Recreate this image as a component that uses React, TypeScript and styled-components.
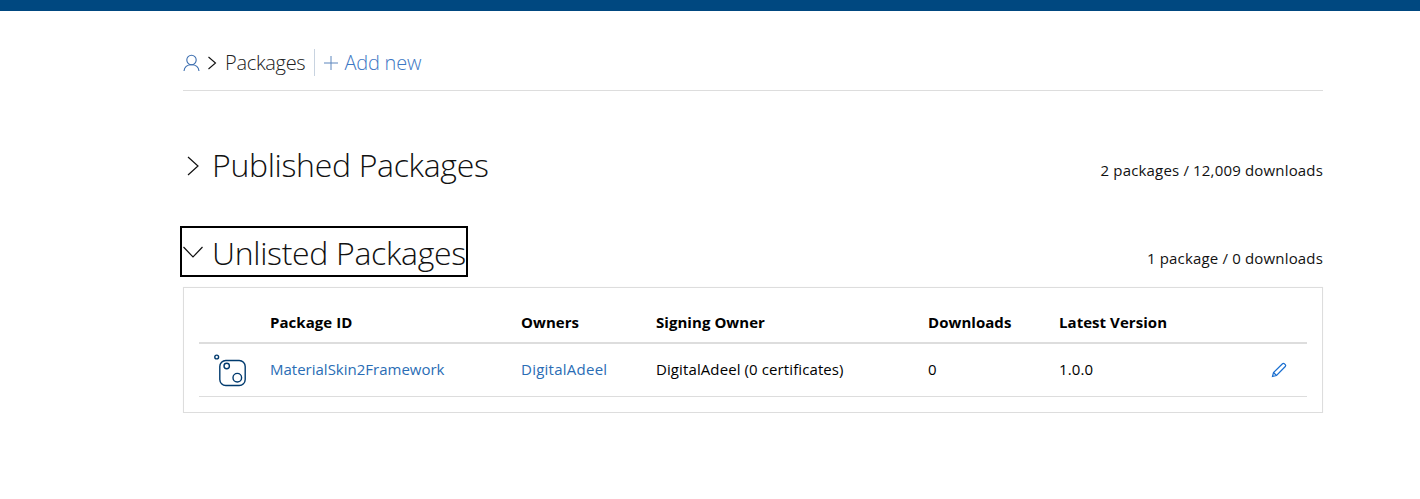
import styled, { createGlobalStyle } from 'styled-components'

const GlobalStyle = createGlobalStyle`
  html, body {
    margin: 0;
    padding: 0;
    background: #fff;
    color: #000;
    font-family: 'Open Sans', 'Noto Sans', 'Liberation Sans', sans-serif;
    font-size: 15px;
  }
`

const TopBar = styled.div`
  height: 11px;
  background-color: #004880;
`

const Container = styled.main`
  width: 1140px;
  margin-left: 183px;
`

const Breadcrumb = styled.nav`
  display: flex;
  align-items: center;
  height: 55px;
  padding-top: 24px;
  border-bottom: 1px solid #ddd;
  font-size: 20px;
  font-weight: 300;
`

const UserIcon = styled.svg`
  flex: none;
  display: block;
`

const CrumbChevron = styled.svg`
  flex: none;
  display: block;
  margin-left: 7px;
`

const CrumbText = styled.span`
  margin-left: 8px;
  padding-right: 9px;
  color: #222;
  letter-spacing: -0.3px;
`

const AddNew = styled.a`
  display: flex;
  align-items: center;
  gap: 6px;
  height: 27px;
  padding-left: 9px;
  border-left: 1px solid #c8d3e0;
  color: #3d77c4;
  letter-spacing: -0.2px;
`

const Section = styled.section<{ $top: number }>`
  margin-top: ${({ $top }) => $top}px;
`

const SectionHeader = styled.div`
  display: flex;
  align-items: center;
  justify-content: space-between;
`

const SectionToggle = styled.div<{ $focused?: boolean }>`
  display: flex;
  align-items: center;
  gap: 9px;
  height: ${({ $focused }) => ($focused ? 47 : 46)}px;
  margin-left: ${({ $focused }) => ($focused ? -1 : 0)}px;
  padding-left: ${({ $focused }) => ($focused ? 1 : 0)}px;
  outline: ${({ $focused }) => ($focused ? '2px solid #000' : 'none')};
`

const SectionTitle = styled.h2<{ $low?: boolean }>`
  margin: ${({ $low }) => ($low ? 3 : -2)}px 0 0;
  font-size: 32px;
  font-weight: 300;
  color: #111;
  letter-spacing: -0.32px;
  line-height: 46px;
`

const Summary = styled.span<{ $low?: boolean }>`
  margin-top: ${({ $low }) => ($low ? 13 : 8)}px;
  color: #111;
  letter-spacing: 0.17px;
`

const Panel = styled.div`
  margin-top: 12px;
  padding: 15px 15px 15px;
  border: 1px solid #ddd;
  box-shadow: 0 0 1px rgba(0, 0, 0, 0.05);
`

const Grid = styled.div`
  display: grid;
  grid-template-columns: 71px 251px 135px 272px 131px 1fr 40px;
`

const HeadCell = styled.div`
  display: flex;
  align-items: center;
  height: 37px;
  padding-bottom: 2px;
  border-bottom: 2px solid #ddd;
  font-weight: 700;
  letter-spacing: 0.05px;
`

const Cell = styled.div`
  display: flex;
  align-items: center;
  height: 50px;
  padding-bottom: 2px;
  border-bottom: 1px solid #ddd;
  letter-spacing: 0.1px;
`

const IconCell = styled(Cell)`
  padding-bottom: 0;
  height: 52px;
  padding-left: 14px;
`

const EditCell = styled(Cell)`
  padding-bottom: 0;
  height: 52px;
  padding-left: 4px;
`

const PackageLink = styled.a`
  color: #2a6db5;
  letter-spacing: 0;
`

const OwnerLink = styled(PackageLink)`
  letter-spacing: 0.25px;
`

const PackageIcon = () => (
  <svg width="36" height="36" viewBox="0 0 36 36" fill="none" stroke="#003a6e" strokeWidth="1.4">
    <circle cx="3.700" cy="5" r="1.900" />
    <rect x="6.800" y="8.500" width="25.400" height="25" rx="6" />
    <circle cx="13.700" cy="14" r="2.700" />
    <circle cx="24.300" cy="25.700" r="4.300" />
  </svg>
)

const PencilIcon = () => (
  <svg width="16" height="16" viewBox="0 0 16 16" fill="none" stroke="#1a6fd0" strokeWidth="1.200">
    <path d="M1.500 14.500l1-4L11.500 1.700a1.300 1.300 0 0 1 1.800 0l1 1a1.300 1.300 0 0 1 0 1.800L5.500 13.500z" />
    <path d="M2.500 10.500l3 3" />
  </svg>
)

const columns = ['', 'Package ID', 'Owners', 'Signing Owner', 'Downloads', 'Latest Version', '']

export default function App() {
  return (
    <>
      <GlobalStyle />
      <TopBar />
      <Container>
        <Breadcrumb>
          <UserIcon width="17" height="18" viewBox="0 0 17 18" fill="none" stroke="#3d6fb0" strokeWidth="1.100">
            <circle cx="8.500" cy="6" r="4.700" />
            <path d="M1 17c.4-4 3-6.300 7.500-6.300S15.600 13 16 17" />
          </UserIcon>
          <CrumbChevron width="10" height="14" viewBox="0 0 10 14" fill="none" stroke="#111" strokeWidth="1.100">
            <path d="M1.500 1l7 6-7 6" />
          </CrumbChevron>
          <CrumbText>Packages</CrumbText>
          <AddNew>
            <svg width="14" height="14" viewBox="0 0 14 14" stroke="#5d86bd" strokeWidth="1">
              <path d="M7 0v14M0 7h14" />
            </svg>
            Add new
          </AddNew>
        </Breadcrumb>

        <Section $top={52}>
          <SectionHeader>
            <SectionToggle>
              <svg width="20" height="22" viewBox="0 0 20 22" fill="none" stroke="#111" strokeWidth="1.200">
                <path d="M5 2l10 9-10 9" />
              </svg>
              <SectionTitle>Published Packages</SectionTitle>
            </SectionToggle>
            <Summary>2 packages / 12,009 downloads</Summary>
          </SectionHeader>
        </Section>

        <Section $top={39}>
          <SectionHeader>
            <SectionToggle $focused>
              <svg width="20" height="22" viewBox="0 0 20 22" fill="none" stroke="#111" strokeWidth="1.200">
                <path d="M0.500 6l9.500 10 9.500-10" />
              </svg>
              <SectionTitle $low>Unlisted Packages</SectionTitle>
            </SectionToggle>
            <Summary $low>1 package / 0 downloads</Summary>
          </SectionHeader>
          <Panel>
            <Grid>
              {columns.map((c, i) => (
                <HeadCell key={i}>{c}</HeadCell>
              ))}
              <IconCell>
                <PackageIcon />
              </IconCell>
              <Cell>
                <PackageLink>MaterialSkin2Framework</PackageLink>
              </Cell>
              <Cell>
                <OwnerLink>DigitalAdeel</OwnerLink>
              </Cell>
              <Cell>DigitalAdeel (0 certificates)</Cell>
              <Cell>0</Cell>
              <Cell>1.0.0</Cell>
              <EditCell>
                <PencilIcon />
              </EditCell>
            </Grid>
          </Panel>
        </Section>
      </Container>
    </>
  )
}
